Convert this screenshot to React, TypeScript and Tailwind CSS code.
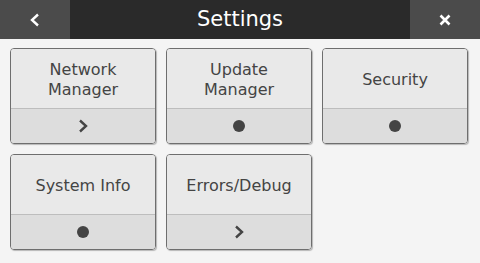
import React from 'react';

type Tile = { label: string[]; kind: 'chevron' | 'dot' };

const tiles: Tile[] = [
  { label: ['Network', 'Manager'], kind: 'chevron' },
  { label: ['Update', 'Manager'], kind: 'dot' },
  { label: ['Security'], kind: 'dot' },
  { label: ['System Info'], kind: 'dot' },
  { label: ['Errors/Debug'], kind: 'chevron' },
];

const Chevron = ({ dir }: { dir: 'left' | 'right' }) => (
  <svg width="12" height="14" viewBox="0 0 12 14" fill="none">
    <path
      d={dir === 'right' ? 'M3 1.5 L9 7 L3 12.5' : 'M9 1.5 L3 7 L9 12.5'}
      stroke="currentColor"
      strokeWidth="2.4"
      strokeLinecap="butt"
      strokeLinejoin="miter"
    />
  </svg>
);

export default function App() {
  return (
    <div
      className="w-[480px] h-[263px] bg-[#f4f4f4] overflow-hidden"
      style={{ fontFamily: '"DejaVu Sans", sans-serif' }}
    >
      {/* Header */}
      <div className="flex h-[39px] bg-[#2a2a2a] text-white">
        <button className="w-[70px] flex items-center justify-center bg-[#4b4b4b]">
          <Chevron dir="left" />
        </button>
        <div className="flex-1 flex items-center justify-center pt-[1px] text-[21px]">Settings</div>
        <button className="w-[70px] flex items-center justify-center bg-[#4b4b4b]">
          <svg width="12" height="12" viewBox="0 0 12 12">
            <path d="M1.5 1.5 L10.5 10.5 M10.5 1.5 L1.5 10.5" stroke="currentColor" strokeWidth="2.6" />
          </svg>
        </button>
      </div>

      {/* Tiles */}
      <div className="grid grid-cols-3 gap-x-[10px] gap-y-[10px] pl-[10px] pr-[12px] pt-[9px]">
        {tiles.map((t) => (
          <div
            key={t.label.join(' ')}
            className="h-[96px] flex flex-col rounded-[4px] border border-[#6e6e6e] overflow-hidden shadow-[1px_1px_1px_rgba(0,0,0,0.25)]"
          >
            <div className="h-[59px] pt-[2px] bg-[#e9e9e9] flex flex-col items-center justify-center text-[16px] leading-[20px] text-[#444]">
              {t.label.map((l) => (
                <span key={l}>{l}</span>
              ))}
            </div>
            <div className="flex-1 bg-[#dddddd] border-t border-[#bdbdbd] flex items-center justify-center text-[#444]">
              {t.kind === 'chevron' ? (
                <Chevron dir="right" />
              ) : (
                <div className="w-[12px] h-[12px] rounded-full bg-[#444]" />
              )}
            </div>
          </div>
        ))}
      </div>
    </div>
  );
}
